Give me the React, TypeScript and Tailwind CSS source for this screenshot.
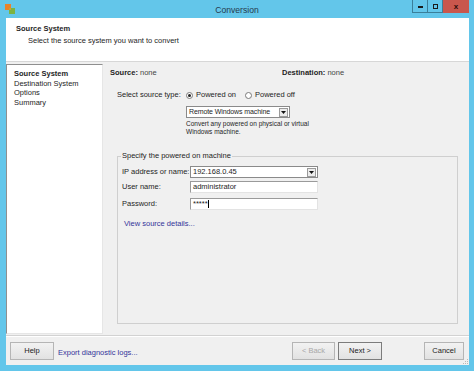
import React from "react";

const font = "font-['Liberation_Sans',Arial,sans-serif]";

function Radio({ checked }: { checked?: boolean }) {
  return (
    <span className="w-[7px] h-[7px] rounded-full border border-[#7a7a7a] bg-white flex items-center justify-center shrink-0">
      {checked && <span className="w-[3px] h-[3px] rounded-full bg-[#222]" />}
    </span>
  );
}

function DropArrow() {
  return (
    <span className="w-[9px] h-[9px] mr-[1px] border border-[#9a9a9a] bg-[#ececec] flex items-center justify-center shrink-0">
      <svg width="5" height="3" viewBox="0 0 5 3">
        <path d="M0 0h5L2.5 3z" fill="#111" />
      </svg>
    </span>
  );
}

function Btn({ label, w, disabled, primary }: { label: string; w: string; disabled?: boolean; primary?: boolean }) {
  return (
    <div
      className={`${w} h-[18px] flex items-center justify-center bg-gradient-to-b from-[#f2f2f2] to-[#e2e2e2] border ${
        primary ? "border-[#7c7c7c]" : "border-[#b5b5b5]"
      } ${disabled ? "text-[#a8a8a8]" : "text-[#222]"}`}
    >
      {label}
    </div>
  );
}

export default function App() {
  return (
    <div className={`w-[474px] h-[371px] bg-[#63c6ea] flex flex-col text-[7.5px] text-[#1e1e1e] ${font}`}>
      {/* title bar */}
      <div className="h-[18px] grid grid-cols-[1fr_auto_1fr] shrink-0">
        <div className="pl-[5px] pt-[4px]">
          <svg width="10" height="10" viewBox="0 0 10 10">
            <rect x="0" y="0" width="6" height="6" fill="#e8832a" />
            <rect x="4" y="4" width="6" height="6" fill="#7cb342" />
            <rect x="4" y="4" width="2" height="2" fill="#c9a13a" />
          </svg>
        </div>
        <div className="text-[8.6px] text-[#263a4e] pt-[4px]">Conversion</div>
        <div className="flex justify-end pr-[5px]">
          <div className="w-[16px] h-[13px] border border-[#3b7f9a] border-t-0 flex items-center justify-center">
            <span className="w-[5px] h-[2px] bg-[#1a1a1a] mt-[2px]" />
          </div>
          <div className="w-[15px] h-[13px] border-b border-r border-[#3b7f9a] flex items-center justify-center">
            <span className="w-[5px] h-[5px] border-[1.5px] border-[#1a1a1a]" />
          </div>
          <div className="w-[26px] h-[13px] bg-[#c9574d] flex items-center justify-center text-[8px] font-bold text-[#2a0d0a]">
            x
          </div>
        </div>
      </div>

      {/* client area */}
      <div className="flex-1 ml-[6px] mr-[5px] mb-[6px] bg-[#f0f0f0] flex flex-col">
        <div className="h-[44px] bg-white border-b border-[#d7d7d7] pl-[10px] pt-[6px] leading-[10px]">
          <div className="font-bold">Source System</div>
          <div className="pl-[12px] mt-[2px]">Select the source system you want to convert</div>
        </div>

        <div className="h-[273px] flex pt-[2px] pb-[1px]">
          <div className="w-[97px] bg-white border-t border-l border-[#8f8f8f] border-r border-r-[#e6e6e6] border-b border-b-[#e6e6e6] pl-[7px] pt-[4px] leading-[9.7px]">
            <div className="font-bold">Source System</div>
            <div>Destination System</div>
            <div>Options</div>
            <div>Summary</div>
          </div>

          <div className="flex-1 pl-[7px] pt-[4px] leading-[10px]">
            <div className="flex">
              <div className="w-[172px]">
                <span className="font-bold">Source:</span> <span className="text-[#444]">none</span>
              </div>
              <div>
                <span className="font-bold">Destination:</span> <span className="text-[#444]">none</span>
              </div>
            </div>

            <div className="flex items-center mt-[12px] pl-[7px]">
              <div className="w-[69px]">Select source type:</div>
              <Radio checked />
              <span className="ml-[3px] w-[49px]">Powered on</span>
              <Radio />
              <span className="ml-[3px]">Powered off</span>
            </div>

            <div className="ml-[76px] mt-[6px] w-[104px] h-[12px] bg-white border border-[#8a8a8a] flex items-center justify-between pl-[2px]">
              <span className="text-[7px] tracking-[-0.1px]">Remote Windows machine</span>
              <DropArrow />
            </div>

            <div className="ml-[76px] mt-[2px] text-[6.5px] leading-[8px]">
              Convert any powered on physical or virtual
              <br />
              Windows machine.
            </div>

            <fieldset className="ml-[7px] mt-[15px] w-[341px] h-[173px] border border-[#cfcfcf] px-[4px]">
              <legend className="ml-[-1px] px-[1px] leading-[10px]">Specify the powered on machine</legend>
              <div className="flex items-center mt-[5px]">
                <div className="w-[68px]">IP address or name:</div>
                <div className="w-[128px] h-[12px] bg-white border border-[#8a8a8a] flex items-center justify-between pl-[2px]">
                  <span>192.168.0.45</span>
                  <DropArrow />
                </div>
              </div>
              <div className="flex items-center mt-[3px]">
                <div className="w-[68px]">User name:</div>
                <div className="w-[128px] h-[12px] bg-white border border-[#9a9a9a] border-r-[#e3e3e3] border-b-[#e3e3e3] flex items-center pl-[2px]">
                  administrator
                </div>
              </div>
              <div className="flex items-center mt-[5px]">
                <div className="w-[68px]">Password:</div>
                <div className="w-[128px] h-[12px] bg-white border border-[#9a9a9a] border-r-[#e3e3e3] border-b-[#e3e3e3] flex items-center pl-[2px]">
                  *****<span className="w-[1px] h-[8px] bg-black" />
                </div>
              </div>
              <div className="mt-[9px] pl-[2px] text-[#34349a]">View source details...</div>
            </fieldset>
          </div>
        </div>

        <div className="h-[2px] border-t border-[#d2d2d2] border-b border-b-white" />

        <div className="flex-1 flex items-start pt-[5px] pl-[4px] pr-[5px] relative">
          <Btn label="Help" w="w-[44px]" />
          <div className="ml-[4px] mt-[5px] text-[#34349a]">Export diagnostic logs...</div>
          <div className="flex-1" />
          <Btn label="< Back" w="w-[43px]" disabled />
          <div className="ml-[3px]">
            <Btn label="Next >" w="w-[44px]" primary />
          </div>
          <div className="ml-[42px]">
            <Btn label="Cancel" w="w-[40px]" />
          </div>
          <svg className="absolute right-[0px] bottom-[0px]" width="7" height="7" viewBox="0 0 7 7">
            <g fill="#b8b8b8">
              <rect x="5" y="1" width="1" height="1" />
              <rect x="3" y="3" width="1" height="1" />
              <rect x="5" y="3" width="1" height="1" />
              <rect x="1" y="5" width="1" height="1" />
              <rect x="3" y="5" width="1" height="1" />
              <rect x="5" y="5" width="1" height="1" />
            </g>
          </svg>
        </div>
      </div>
    </div>
  );
}
